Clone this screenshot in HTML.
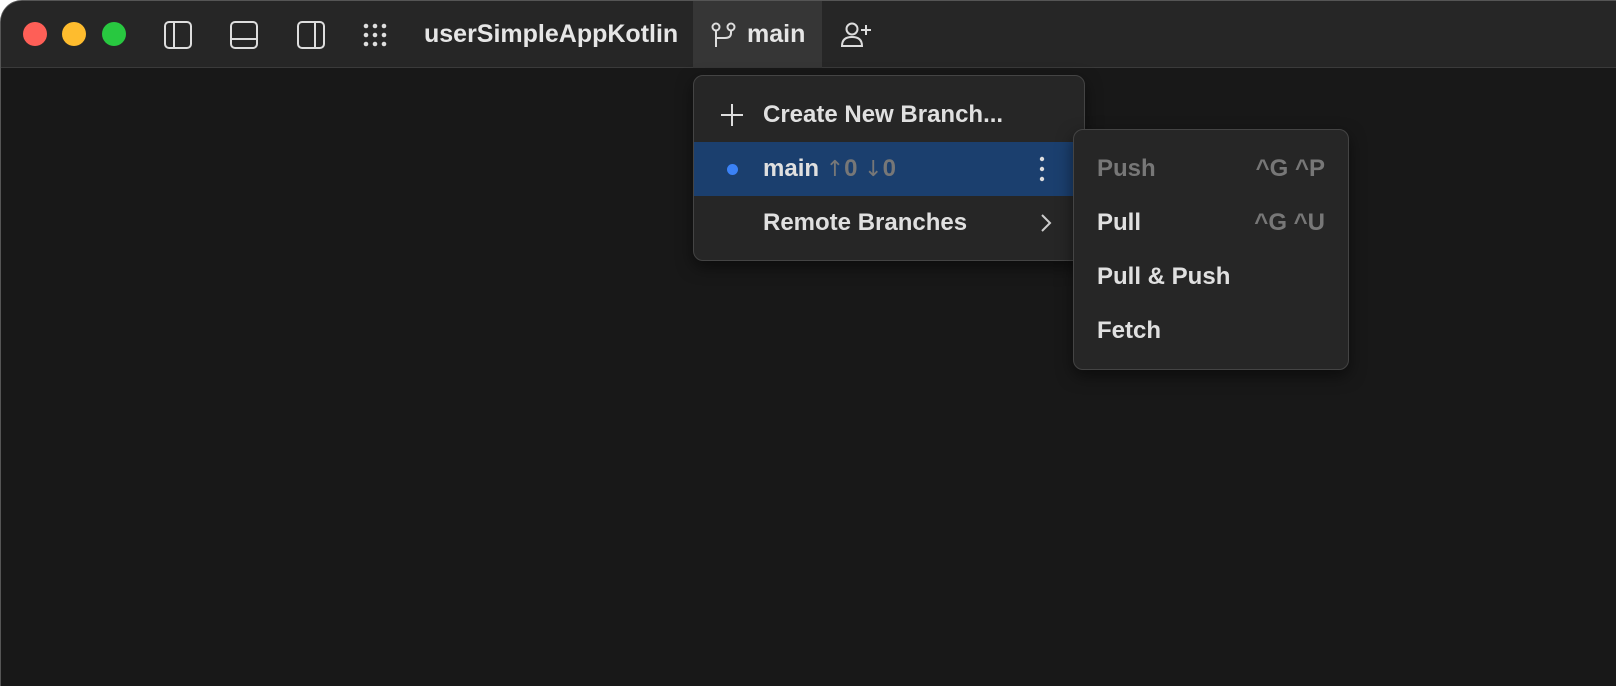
<!DOCTYPE html>
<html><head><style>
*{margin:0;padding:0;box-sizing:border-box}
body{width:1616px;height:686px;background:#fff;font-family:"Liberation Sans",sans-serif;overflow:hidden;position:relative}
.win{position:absolute;left:0;top:0;width:1616px;height:686px;background:#181818;border-top-left-radius:22px;border:1px solid #555;border-right:none;border-bottom:none;overflow:hidden}
.bar{position:absolute;left:0;top:0;right:0;height:67px;background:#262626;border-bottom:1px solid #3a3a3a}
.dot{position:absolute;top:21px;width:24px;height:24px;border-radius:50%}
.t{position:absolute;color:#e6e6e6;font-size:25px;font-weight:bold}
.menu{position:absolute;background:#262626;border:1px solid #444;border-radius:10px;box-shadow:0 6px 16px rgba(0,0,0,.5);overflow:hidden}
.row{position:absolute;left:0;right:0;height:54px;color:#e0e0e0;font-size:24px;font-weight:bold;line-height:54px}
.gray{color:#777}
.ar{font-family:"DejaVu Sans",sans-serif;font-weight:normal;font-size:22px}
</style></head><body>
<div class="win">
<div class="bar">
<div class="dot" style="left:22px;background:#fe5f57"></div>
<div class="dot" style="left:61px;background:#febc2e"></div>
<div class="dot" style="left:101px;background:#28c840"></div>
<svg style="position:absolute;left:163px;top:20px" width="28" height="28" fill="none" stroke="#ddd" stroke-width="2"><rect x="1" y="1" width="26" height="26" rx="4"/><line x1="10" y1="1" x2="10" y2="27"/></svg>
<svg style="position:absolute;left:229px;top:20px" width="28" height="28" fill="none" stroke="#ddd" stroke-width="2"><rect x="1" y="1" width="26" height="26" rx="4"/><line x1="1" y1="18" x2="27" y2="18"/></svg>
<svg style="position:absolute;left:296px;top:20px" width="28" height="28" fill="none" stroke="#ddd" stroke-width="2"><rect x="1" y="1" width="26" height="26" rx="4"/><line x1="18" y1="1" x2="18" y2="27"/></svg>
<svg style="position:absolute;left:361px;top:21px" width="26" height="26" fill="#ddd"><circle cx="4" cy="4" r="2.3"/><circle cx="13" cy="4" r="2.3"/><circle cx="22" cy="4" r="2.3"/><circle cx="4" cy="13" r="2.3"/><circle cx="13" cy="13" r="2.3"/><circle cx="22" cy="13" r="2.3"/><circle cx="4" cy="22" r="2.3"/><circle cx="13" cy="22" r="2.3"/><circle cx="22" cy="22" r="2.3"/></svg>
<div class="t" style="left:423px;top:19px">userSimpleAppKotlin</div>
<div style="position:absolute;left:692px;top:0;width:129px;height:67px;background:#363636"></div>
<svg style="position:absolute;left:710px;top:21px" width="26" height="26" fill="none" stroke="#ddd" stroke-width="2"><circle cx="5" cy="5" r="3.5"/><circle cx="20" cy="5" r="3.5"/><line x1="5" y1="8.5" x2="5" y2="25"/><path d="M20 8.5 V11 Q20 16 14 16 H5"/></svg>
<div class="t" style="left:746px;top:19px">main</div>
<svg style="position:absolute;left:840px;top:21px" width="32" height="26" fill="none" stroke="#ddd" stroke-width="2"><circle cx="11" cy="7" r="5.5"/><path d="M1 24 Q1 15 11 15 Q21 15 21 24 Z"/><line x1="25" y1="3" x2="25" y2="13"/><line x1="20" y1="8" x2="30" y2="8"/></svg>
</div>
<div class="menu" style="left:692px;top:74px;width:392px;height:186px">
<div class="row" style="top:12px"><svg style="position:absolute;left:26px;top:15px" width="24" height="24" stroke="#ddd" stroke-width="2"><line x1="12" y1="1" x2="12" y2="23"/><line x1="1" y1="12" x2="23" y2="12"/></svg><span style="position:absolute;left:69px">Create New Branch...</span></div>
<div class="row" style="top:66px;background:#1b3f6e"><span style="position:absolute;left:33px;top:22px;width:11px;height:11px;border-radius:50%;background:#3b82f6"></span><span style="position:absolute;left:69px">main <span class="gray"><span class="ar">↑</span>0 <span class="ar">↓</span>0</span></span><svg style="position:absolute;left:344px;top:13px" width="8" height="28" fill="#ddd"><circle cx="4" cy="4" r="2.2"/><circle cx="4" cy="14" r="2.2"/><circle cx="4" cy="24" r="2.2"/></svg></div>
<div class="row" style="top:120px"><span style="position:absolute;left:69px">Remote Branches</span><svg style="position:absolute;left:346px;top:17px" width="12" height="20" fill="none" stroke="#ccc" stroke-width="2"><path d="M2 2 L10 10 L2 18"/></svg></div>
</div>
<div class="menu" style="left:1072px;top:128px;width:276px;height:241px">
<div class="row" style="top:12px"><span class="gray" style="position:absolute;left:23px">Push</span><span class="gray" style="position:absolute;right:23px">^G ^P</span></div>
<div class="row" style="top:66px"><span style="position:absolute;left:23px">Pull</span><span class="gray" style="position:absolute;right:23px">^G ^U</span></div>
<div class="row" style="top:120px"><span style="position:absolute;left:23px">Pull &amp; Push</span></div>
<div class="row" style="top:174px"><span style="position:absolute;left:23px">Fetch</span></div>
</div>
</div>
</body></html>
